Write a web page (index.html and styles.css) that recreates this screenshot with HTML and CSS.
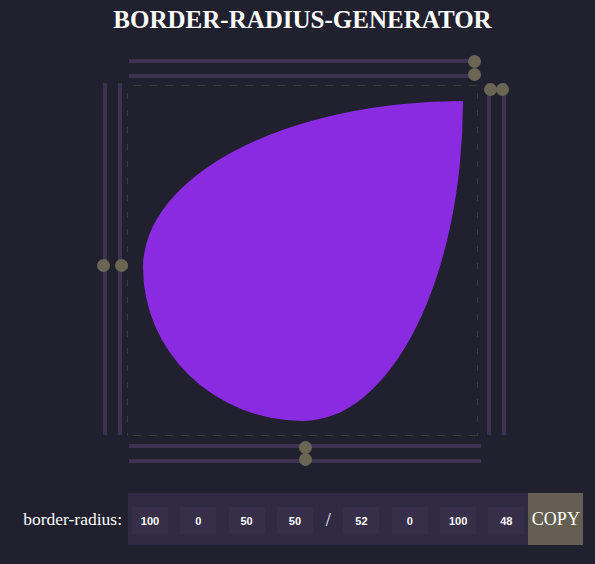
FILE: index.html
```html
<!DOCTYPE html>
<html lang="en">
<head>
<meta charset="utf-8">
<title>Border Radius Generator</title>
<link rel="stylesheet" href="styles.css">
</head>
<body>
  <h1 class="title">BORDER-RADIUS-GENERATOR</h1>
  <div class="editor">
    <div class="track h top1" style="--p:1;--o:0px"><span class="thumb"></span></div>
    <div class="track h top2" style="--p:1;--o:-1.7px"><span class="thumb"></span></div>
    <div class="track v left1" style="--p:0.52;--o:-1.5px"><span class="thumb"></span></div>
    <div class="track v left2" style="--p:0.52;--o:1px"><span class="thumb"></span></div>
    <div class="box"><div class="shape"></div></div>
    <div class="track v right1" style="--p:0;--o:1px"><span class="thumb"></span></div>
    <div class="track v right2" style="--p:0;--o:-1.5px"><span class="thumb"></span></div>
    <div class="track h bottom1" style="--p:0.5;--o:1px"><span class="thumb"></span></div>
    <div class="track h bottom2" style="--p:0.5;--o:-1.7px"><span class="thumb"></span></div>
  </div>
  <div class="controls">
    <div class="label">border-radius:</div>
    <div class="bar">
      <div class="fields">
        <input class="val" type="text" value="100">
        <input class="val" type="text" value="0">
        <input class="val" type="text" value="50">
        <input class="val" type="text" value="50">
        <span class="slash">/</span>
        <input class="val" type="text" value="52">
        <input class="val" type="text" value="0">
        <input class="val" type="text" value="100">
        <input class="val" type="text" value="48">
      </div>
      <button class="copy" type="button">COPY</button>
    </div>
  </div>
</body>
</html>
```

FILE: styles.css
```css
* { box-sizing: border-box; }

body {
  margin: 0;
  background: #21202f;
  color: #ffffff;
  font-family: "Liberation Serif", "Times New Roman", serif;
}

.title {
  margin: 6px 0 0;
  padding-left: 10px;
  font-size: 25px;
  line-height: 28px;
  font-weight: bold;
  text-align: center;
}

.editor {
  display: grid;
  margin: 25px 0 0 103px;
  grid-template-columns: 4px 11px 4px 5px 354px 6px 4px 11px 4px;
  grid-template-rows: 4px 11px 4px 5px 353px 8px 4px 11px 4px;
}

.track {
  position: relative;
  background: #3b3350;
}

.track.h { width: 352px; height: 4px; grid-column: 5; margin-left: 2px; }
.track.v { width: 4px; height: 352px; grid-row: 5; align-self: start; }

.top1 { grid-row: 1; }
.top2 { grid-row: 3; }
.bottom1 { grid-row: 7; }
.bottom2 { grid-row: 9; }
.left1 { grid-column: 1; }
.left2 { grid-column: 3; }
.right1 { grid-column: 7; }
.right2 { grid-column: 9; }

.thumb {
  position: absolute;
  width: 13px;
  height: 13px;
  border-radius: 50%;
  background: #6b6554;
}

.track.h .thumb {
  left: calc((100% - 13px) * var(--p));
  top: calc(50% - 6.5px + var(--o));
}

.track.v .thumb {
  top: calc((100% - 13px) * var(--p));
  left: calc(50% - 6.5px + var(--o));
}

.box {
  grid-column: 5;
  grid-row: 5;
  width: 351px;
  height: 351px;
  margin-top: 2px;
  display: flex;
  align-items: center;
  justify-content: center;
  background:
    repeating-linear-gradient(90deg, #3b3c35 0 8px, transparent 8px 16px) 6px 0 / 100% 1px no-repeat,
    repeating-linear-gradient(90deg, #3b3c35 0 8px, transparent 8px 16px) 6px 100% / 100% 1px no-repeat,
    repeating-linear-gradient(180deg, #3b3c35 0 6px, transparent 6px 17px) 0 8px / 1px 100% no-repeat,
    repeating-linear-gradient(180deg, #3b3c35 0 6px, transparent 6px 17px) 100% 8px / 1px 100% no-repeat;
}

.shape {
  width: 320px;
  height: 320px;
  background: #8a2be2;
  border-radius: 100% 0 50% 50% / 52% 0 100% 48%;
}

.controls {
  display: flex;
  align-items: center;
  margin-top: 30px;
}

.label {
  width: 128px;
  padding-right: 6px;
  text-align: right;
  font-size: 17.5px;
}

.bar {
  display: flex;
  align-items: stretch;
  height: 52px;
  background: #302a42;
}

.fields {
  display: flex;
  align-items: center;
  gap: 12.3px;
  padding: 3px 0 0 4px;
}

.val {
  width: 36px;
  height: 27px;
  padding: 0;
  border: none;
  outline: none;
  background: #372e4a;
  color: #ffffff;
  text-align: center;
  font-family: "Liberation Sans", Arial, sans-serif;
  font-size: 11px;
  font-weight: bold;
}

.slash {
  width: 6px;
  font-size: 18px;
  text-align: center;
}

.copy {
  width: 55px;
  margin-left: 4px;
  padding: 0;
  border: none;
  background: #645f52;
  color: #ffffff;
  font-family: "Liberation Serif", "Times New Roman", serif;
  font-size: 18px;
}
```
